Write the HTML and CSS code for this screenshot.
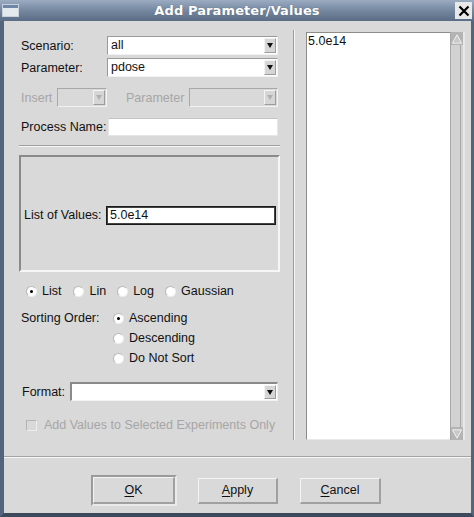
FILE: index.html
```html
<!DOCTYPE html>
<html>
<head>
<meta charset="utf-8">
<link rel="stylesheet" href="styles.css">
</head>
<body>
<div class="window">
  <div class="titlebar">
    <div class="winicon"><div class="winicon-bar"></div></div>
    <div class="title">Add Parameter/Values</div>
    <div class="closebtn">
      <svg width="12" height="12" viewBox="0 0 12 12"><path d="M1.5 1.5 L10.5 10.5 M10.5 1.5 L1.5 10.5" stroke="#000" stroke-width="2.2" fill="none"/></svg>
    </div>
  </div>
  <div class="frame">
    <div class="main">
      <div class="left">
        <div class="row r1">
          <span class="lbl">Scenario:</span>
          <div class="combo"><div class="field">all</div><div class="arrow"><span class="tri"></span></div></div>
        </div>
        <div class="row r2">
          <span class="lbl">Parameter:</span>
          <div class="combo"><div class="field">pdose</div><div class="arrow"><span class="tri"></span></div></div>
        </div>
        <div class="row r3">
          <span class="dis insert-lbl">Insert</span>
          <div class="combo disabled small"><div class="field"></div><div class="arrow"><span class="tri"></span></div></div>
          <span class="dis param-lbl">Parameter</span>
          <div class="combo disabled grow"><div class="field"></div><div class="arrow"><span class="tri"></span></div></div>
        </div>
        <div class="row r4">
          <span class="lbl pn">Process Name:</span>
          <div class="input"></div>
        </div>
        <div class="hsep"></div>
        <div class="group">
          <span class="lov-lbl">List of Values:</span>
          <div class="input focus">5.0e14</div>
        </div>
        <div class="radios">
          <span class="radio on"></span><span class="rl">List</span>
          <span class="radio"></span><span class="rl">Lin</span>
          <span class="radio"></span><span class="rl">Log</span>
          <span class="radio"></span><span class="rl">Gaussian</span>
        </div>
        <div class="sorting">
          <span class="lbl sort-lbl">Sorting Order:</span>
          <div class="sortopts">
            <div class="opt"><span class="radio on"></span><span class="rl">Ascending</span></div>
            <div class="opt"><span class="radio"></span><span class="rl">Descending</span></div>
            <div class="opt"><span class="radio"></span><span class="rl">Do Not Sort</span></div>
          </div>
        </div>
        <div class="row format">
          <span class="lbl fmt-lbl">Format:</span>
          <div class="combo sunken"><div class="field"></div><div class="arrow"><span class="tri"></span></div></div>
        </div>
        <div class="checkrow">
          <span class="check"></span><span class="dis">Add Values to Selected Experiments Only</span>
        </div>
      </div>
      <div class="vsep"></div>
      <div class="right">
        <div class="listbox">5.0e14</div>
        <div class="scrollbar">
          <div class="sbtn"><svg width="13" height="12" viewBox="0 0 13 12"><path d="M6.5 1.5 L11.5 10.5 L1.5 10.5 Z" fill="#c8c8c8" stroke="#f4f4f4" stroke-width="1"/></svg></div>
          <div class="track"></div>
          <div class="sbtn"><svg width="13" height="12" viewBox="0 0 13 12"><path d="M6.5 10.5 L11.5 1.5 L1.5 1.5 Z" fill="#c8c8c8" stroke="#f4f4f4" stroke-width="1"/></svg></div>
        </div>
      </div>
    </div>
    <div class="bsep"></div>
    <div class="buttons">
      <div class="defwrap"><div class="btn"><u>O</u>K</div></div>
      <div class="btn apply"><u>A</u>pply</div>
      <div class="btn cancel"><u>C</u>ancel</div>
    </div>
  </div>
</div>
</body>
</html>
```
FILE: styles.css
```css
* { box-sizing: border-box; }
html, body { margin: 0; padding: 0; }
body {
  width: 474px;
  height: 517px;
  overflow: hidden;
  font-family: "Liberation Sans", Arial, sans-serif;
  font-size: 12.5px;
  color: #111;
  background: #d9d9d9;
}
.window {
  width: 474px;
  height: 517px;
  display: flex;
  flex-direction: column;
}
.titlebar {
  height: 21px;
  flex: none;
  position: relative;
  display: flex;
  align-items: center;
  justify-content: center;
  background: linear-gradient(#9aabc2, #76889f 50%, #5a6c86);
}
.winicon {
  position: absolute;
  left: 2px;
  top: 4px;
  width: 17px;
  height: 13px;
  background: #e4e9ee;
  border: 1px solid #c8d0da;
}
.winicon-bar {
  height: 3px;
  background: #6f86a8;
}
.title {
  font-family: "DejaVu Sans", sans-serif;
  font-weight: bold;
  font-size: 13px;
  color: #fff;
  letter-spacing: 0.1px;
  text-shadow: 0 0 1px #4a5a70;
}
.closebtn {
  position: absolute;
  right: 2px;
  top: 2px;
  width: 17px;
  height: 17px;
  background: #e8e8e8;
  display: flex;
  align-items: center;
  justify-content: center;
}
.frame {
  flex: 1;
  display: flex;
  flex-direction: column;
  border-left: 4px solid #54647c;
  border-right: 3px solid #54647c;
  border-bottom: 4px solid #3d4a5c;
  background: #d9d9d9;
}
.main {
  height: 435px;
  display: flex;
}
.left {
  width: 289px;
  padding: 15px 13px 0 15px;
  display: flex;
  flex-direction: column;
}
.row {
  display: flex;
  align-items: center;
  padding: 0 2px;
  height: 19px;
}
.r2 { margin-top: 3px; }
.r3 { margin-top: 11px; }
.r4 { margin-top: 11px; height: 18px; }
.lbl { width: 86px; flex: none; }
.pn { width: 87px; }
.dis { color: #a6a6a6; }
.combo {
  flex: 1;
  height: 19px;
  display: flex;
  background: #fff;
  border-top: 1px solid #9a9a9a;
  border-left: 1px solid #9a9a9a;
  border-bottom: 1px solid #f2f2f2;
  border-right: 1px solid #f2f2f2;
}
.combo .field {
  flex: 1;
  padding-left: 3px;
  line-height: 17px;
}
.combo .arrow {
  width: 12px;
  margin: 1px 1px 1px 0;
  background: #d6d6d6;
  border-top: 1px solid #f4f4f4;
  border-left: 1px solid #f4f4f4;
  border-bottom: 1px solid #9c9c9c;
  border-right: 1px solid #9c9c9c;
  display: flex;
  align-items: center;
  justify-content: center;
}
.tri {
  width: 0;
  height: 0;
  border-left: 3.5px solid transparent;
  border-right: 3.5px solid transparent;
  border-top: 5px solid #111;
}
.combo.disabled { background: #d9d9d9; border-top-color: #a8a8a8; border-left-color: #a8a8a8; }
.combo.disabled .tri { border-top-color: #b0b0b0; }
.insert-lbl { width: 36px; flex: none; }
.combo.small { flex: none; width: 50px; }
.param-lbl { margin-left: 19px; width: 63px; flex: none; }
.input {
  flex: 1;
  height: 18px;
  background: #fff;
  border: 1px solid #e6e6e6;
  border-top-color: #c4c4c4;
  padding-left: 2px;
  line-height: 16px;
}
.hsep {
  margin-top: 9px;
  height: 2px;
  border-top: 1px solid #a0a0a0;
  border-bottom: 1px solid #f6f6f6;
}
.group {
  margin-top: 8px;
  height: 117px;
  border-top: 2px solid #8a8a8a;
  border-left: 2px solid #8a8a8a;
  border-bottom: 2px solid #f6f6f6;
  border-right: 2px solid #f6f6f6;
  display: flex;
  align-items: center;
  padding: 3px 2px 0 3px;
}
.lov-lbl { width: 82px; flex: none; }
.input.focus {
  border: 1px solid #1a1a1a;
  box-shadow: inset 0 0 0 1px #444;
  padding-left: 3px;
  height: 19px;
  line-height: 17px;
}
.radios {
  margin-top: 11px;
  height: 16px;
  display: flex;
  align-items: center;
  padding-left: 7px;
}
.radio {
  width: 11px;
  height: 11px;
  border-radius: 50%;
  background: #fff;
  border-top: 1px solid #b8b8b8;
  border-left: 1px solid #b8b8b8;
  border-right: 1px solid #efefef;
  border-bottom: 1px solid #efefef;
  flex: none;
  position: relative;
}
.radio.on::after {
  content: "";
  position: absolute;
  left: 3px;
  top: 3px;
  width: 3px;
  height: 3px;
  border-radius: 50%;
  background: #000;
}
.rl { margin-left: 5px; margin-right: 11px; }
.radios .rl:nth-of-type(2) { margin-right: 12px; }
.sorting {
  margin-top: 9px;
  display: flex;
  padding-left: 2px;
}
.sort-lbl { width: 92px; height: 20px; line-height: 20px; }
.sortopts { display: flex; flex-direction: column; }
.opt { height: 20px; display: flex; align-items: center; }
.opt .rl { margin-left: 5px; }
.format { margin-top: 14px; padding-left: 3px; }
.fmt-lbl { width: 48px; }
.combo.sunken {
  border-top: 2px solid #8a8a8a;
  border-left: 2px solid #8a8a8a;
}
.checkrow {
  margin-top: 16px;
  height: 16px;
  display: flex;
  align-items: center;
  padding-left: 7px;
}
.check {
  width: 11px;
  height: 11px;
  border: 1px solid #b4b4b4;
  border-right-color: #eee;
  border-bottom-color: #eee;
  margin-right: 7px;
  flex: none;
}
.vsep {
  width: 2px;
  margin: 9px 0 16px;
  border-left: 1px solid #9c9c9c;
  border-right: 1px solid #f4f4f4;
}
.right {
  flex: 1;
  display: flex;
  padding: 11px 6px 16px 11px;
}
.listbox {
  flex: 1;
  background: #fff;
  border: 1px solid #8c8c8c;
  border-right: none;
  border-bottom-color: #e8e8e8;
  padding: 1px 0 0 1px;
  line-height: 14px;
}
.scrollbar {
  width: 15px;
  display: flex;
  flex-direction: column;
  background: #d2d2d2;
  border-left: 1px solid #a8a8a8;
  border-right: 2px solid #e8e8e8;
}
.sbtn {
  height: 13px;
  background: #b4b4b4;
  display: flex;
  align-items: center;
  justify-content: center;
}
.track {
  flex: 1;
  border-right: 1px solid #a8a8a8;
  margin-right: 2px;
}
.bsep {
  height: 2px;
  border-top: 1px solid #a4a4a4;
  border-bottom: 1px solid #f6f6f6;
}
.buttons {
  flex: 1;
  display: flex;
  align-items: center;
  padding-left: 87px;
  padding-top: 10px;
}
.defwrap {
  width: 86px;
  height: 31px;
  border: 2px solid #9a9a9a;
  border-right-color: #eaeaea;
  border-bottom-color: #eaeaea;
  display: flex;
}
.btn {
  height: 26px;
  display: flex;
  align-items: center;
  justify-content: center;
  background: #d9d9d9;
  border-top: 1px solid #f4f4f4;
  border-left: 1px solid #f4f4f4;
  border-bottom: 2px solid #a0a0a0;
  border-right: 2px solid #a0a0a0;
}
.defwrap .btn { flex: 1; height: auto; }
.apply { width: 80px; margin-left: 21px; }
.cancel { width: 81px; margin-left: 22px; }
u { text-decoration-thickness: 1px; text-underline-offset: 2px; }
```
